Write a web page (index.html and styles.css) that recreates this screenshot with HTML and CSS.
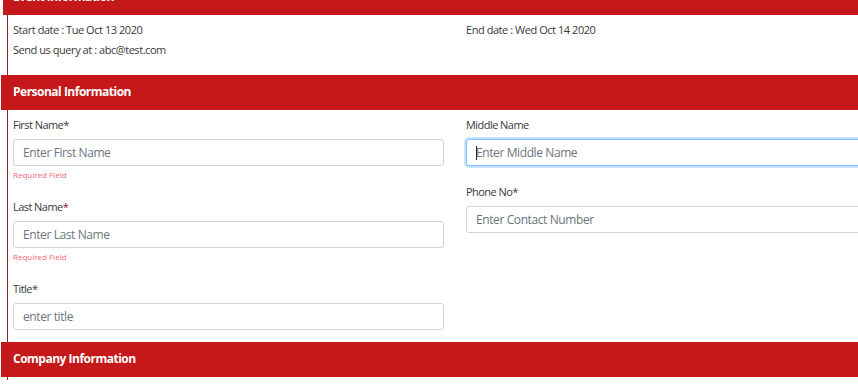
FILE: index.html
```html
<!DOCTYPE html>
<html lang="en">
<head>
    <meta charset="UTF-8">
    <meta name="viewport" content="width=device-width, initial-scale=1.0">
    <title>Registration</title>
    <link rel="stylesheet" href="styles.css">
</head>
<body>
    <div id="page">
        <div class="section-bar first">Event Information</div>
        <div class="event-info">
            <div class="info-row">
                <div>Start date : Tue Oct 13 2020</div>
                <div>End date : Wed Oct 14 2020</div>
            </div>
            <div class="info-line">Send us query at : abc@test.com</div>
        </div>

        <div class="section-bar">Personal Information</div>
        <div class="form-grid">
            <div class="form-col">
                <div class="form-group">
                    <label>First Name*</label>
                    <input type="text" placeholder="Enter First Name">
                    <div class="invalid">Required Field</div>
                </div>
                <div class="form-group">
                    <label>Last Name<span class="star">*</span></label>
                    <input type="text" placeholder="Enter Last Name">
                    <div class="invalid">Required Field</div>
                </div>
                <div class="form-group">
                    <label>Title*</label>
                    <input type="text" placeholder="enter title">
                </div>
            </div>
            <div class="form-col">
                <div class="form-group">
                    <label>Middle Name</label>
                    <div class="input-wrap">
                        <input type="text" class="focused" placeholder="Enter Middle Name">
                        <span class="caret"></span>
                    </div>
                </div>
                <div class="form-group">
                    <label>Phone No*</label>
                    <input type="text" placeholder="Enter Contact Number">
                </div>
            </div>
        </div>

        <div class="section-bar">Company Information</div>
    </div>
</body>
</html>
```

FILE: styles.css
```css
body {
    margin: 0;
    background: #ffffff;
    color: #3a3a3a;
    font-family: 'Open Sans', 'Noto Sans', sans-serif;
    font-size: 11px;
    letter-spacing: -0.45px;
    overflow: hidden;
}

#page {
    width: 920px;
    margin-left: 7px;
    border-left: 1px solid #7d2b2b;
    min-height: 400px;
}

.section-bar {
    margin-left: -7px;
    height: 35px;
    line-height: 34px;
    padding-left: 12px;
    background: #c4181a;
    color: #ffffff;
    font-weight: 700;
    font-size: 12px;
    letter-spacing: -0.5px;
}

.section-bar.first {
    margin-top: -20px;
    margin-left: -5px;
    padding-left: 10px;
}

.event-info {
    padding: 5px 0 15px 5px;
    line-height: 20px;
}

.info-row,
.form-grid {
    display: grid;
    grid-template-columns: 431px 431px;
    column-gap: 22px;
}

.form-grid {
    padding: 6px 0 12px 5px;
}

.form-group {
    margin-bottom: 17px;
}

.form-group:last-child {
    margin-bottom: 0;
}

label {
    display: block;
    line-height: 18px;
    margin-bottom: 5px;
    letter-spacing: -0.55px;
}

.star {
    color: #8b2020;
}

input {
    display: block;
    box-sizing: border-box;
    width: 100%;
    height: 27px;
    padding: 0 9px;
    border: 1px solid #ced4da;
    border-radius: 3px;
    font-family: inherit;
    font-size: 12px;
    letter-spacing: -0.4px;
    color: #495057;
    outline: none;
}

input::placeholder {
    color: #6c757d;
}

input.focused {
    border-color: #80bdff;
    box-shadow: 0 0 0 2px rgba(0, 123, 255, 0.22);
}

.input-wrap {
    position: relative;
}

.caret {
    position: absolute;
    left: 10px;
    top: 7px;
    width: 1px;
    height: 14px;
    background: #222;
}

.invalid {
    margin-top: 2px;
    line-height: 13px;
    font-size: 8px;
    letter-spacing: 0;
    color: #f0677a;
}
```
